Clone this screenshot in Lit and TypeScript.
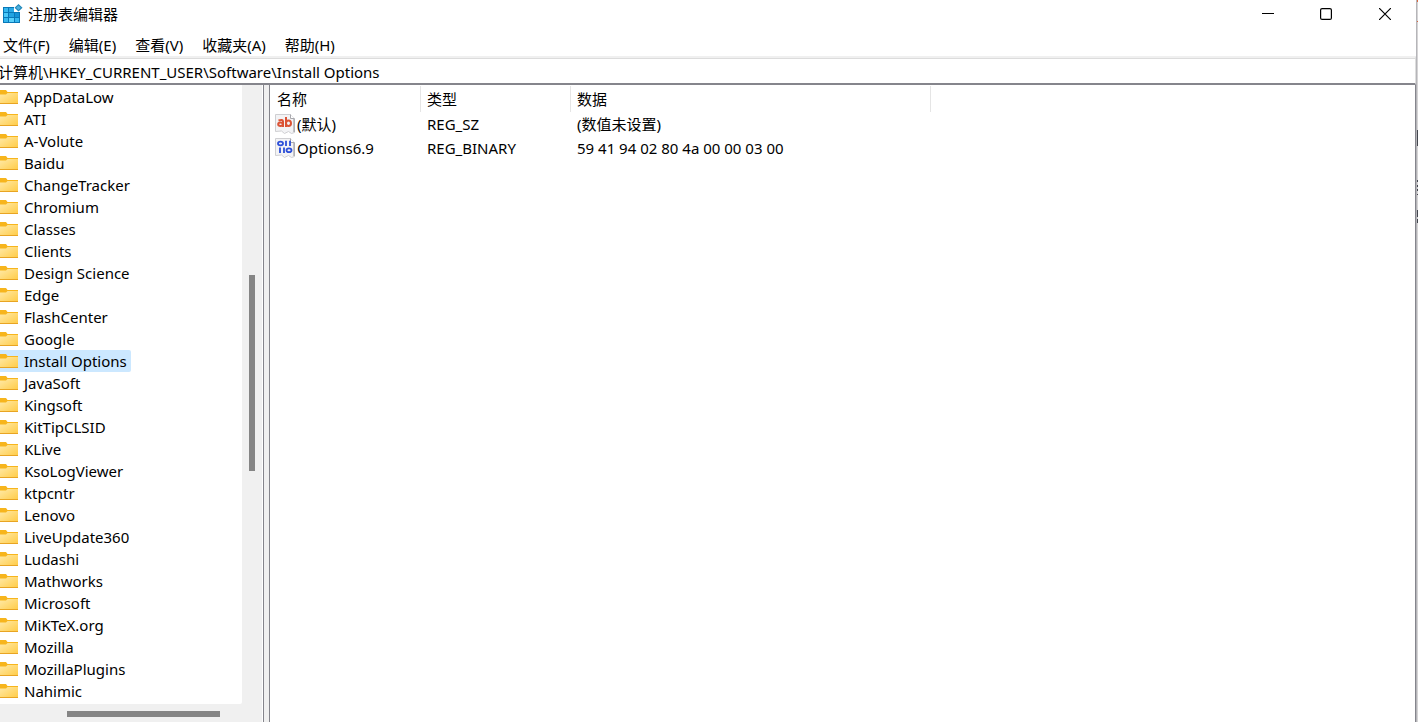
import { LitElement, html, css, svg } from "lit";
import { customElement, state } from "lit/decorators.js";
import { classMap } from "lit/directives/class-map.js";

const KEYS = [
  "AppDataLow", "ATI", "A-Volute", "Baidu", "ChangeTracker", "Chromium", "Classes",
  "Clients", "Design Science", "Edge", "FlashCenter", "Google", "Install Options",
  "JavaSoft", "Kingsoft", "KitTipCLSID", "KLive", "KsoLogViewer", "ktpcntr", "Lenovo",
  "LiveUpdate360", "Ludashi", "Mathworks", "Microsoft", "MiKTeX.org", "Mozilla",
  "MozillaPlugins", "Nahimic",
];

const VALUES = [
  { kind: "text", name: "(默认)", type: "REG_SZ", data: "(数值未设置)" },
  { kind: "binary", name: "Options6.9", type: "REG_BINARY", data: "59 41 94 02 80 4a 00 00 03 00" },
];

const MENUS = ["文件(F)", "编辑(E)", "查看(V)", "收藏夹(A)", "帮助(H)"];

const appIcon = html`<svg class="app-icon" width="20" height="20" viewBox="0 0 20 20" aria-hidden="true">
  <path d="M0 3h11v5h6v11H0z" fill="#0878b8" />
  <g fill="#35b7ee">
    <rect x="1" y="4" width="4" height="4" /><rect x="6" y="4" width="5" height="4" fill="#2aa9e6" />
    <rect x="1" y="9" width="4" height="4" fill="#4cc8f8" /><rect x="6" y="9" width="5" height="4" fill="#22a3e2" /><rect x="12" y="9" width="4" height="4" fill="#1592d6" />
    <rect x="1" y="14" width="4" height="4" /><rect x="6" y="14" width="5" height="4" fill="#5ad0fa" /><rect x="12" y="14" width="4" height="4" />
  </g>
  <path d="M15.500 0l4 3.800-4 3.800-4-3.800z" fill="#1f86b8" />
  <path d="M15.500 1.500l2.400 2.300-2.400 2.300-2.400-2.300z" fill="#4fb0de" />
</svg>`;

const folderIcon = html`<svg class="folder" width="18" height="14" viewBox="0 0 18 14" aria-hidden="true">
  <defs><linearGradient id="g" x1="0" y1="0" x2="1" y2="1">
    <stop offset="0" stop-color="#ffe9a6" /><stop offset="1" stop-color="#ffcb45" />
  </linearGradient></defs>
  <path d="M0 0h6l1.500 2h10.500v3H0z" fill="#f7b51c" />
  <path d="M0 4.500h6l1.500-1.500h10.500v11H0z" fill="url(#g)" />
  <path d="M0 13h18v1H0z" fill="#e8a423" />
</svg>`;

const page = svg`
  <path d="M.5.500h15l4 4v14l-3 1-3-2-4 2-3-2.500-6 .5z" fill="#f3f3f5" stroke="#cfcfd2" />
  <path d="M15.500 .5v4h4" fill="#fff" stroke="#a9a9ad" />
  <path d="M19 5v13" stroke="#929297" />`;

const textIcon = html`<svg width="20" height="20" viewBox="0 0 20 20" aria-hidden="true">${page}
  <g fill="none" stroke="#db5335" stroke-width="2">
    <path d="M3.500 6.500q4.500-1.500 4.500 1v5.500" /><ellipse cx="5.500" cy="10.300" rx="2.300" ry="1.700" />
    <path d="M11 3v10" /><ellipse cx="13.500" cy="9.200" rx="2.500" ry="2.800" />
  </g></svg>`;

const binaryIcon = html`<svg width="20" height="20" viewBox="0 0 20 20" aria-hidden="true">${page}
  <g fill="none" stroke="#2c4fd8" stroke-width="1.800">
    <ellipse cx="5.500" cy="5.500" rx="2.500" ry="1.800" /><path d="M11 2.800v5.200M15 2.800v5.200" />
    <path d="M5 9.500v5.500M9 9.500v5.500" /><ellipse cx="14" cy="12.200" rx="2.500" ry="1.900" />
  </g></svg>`;

@customElement("app-root")
export class AppRoot extends LitElement {
  @state() private selected = "Install Options";

  static styles = css`
    :host {
      display: flex;
      height: 100vh;
      overflow: hidden;
      background: #fff;
      color: #000;
      font: 15px/22px "Noto Sans", "Noto Sans CJK SC", sans-serif;
    }
    * { box-sizing: border-box; }
    button, input { font: inherit; color: inherit; border: 0; background: none; padding: 0; margin: 0; }
    .window { flex: 1; min-width: 0; display: flex; flex-direction: column; }
    .edge { width: 2px; background: #d5d4d5; border-left: 1px solid #b5b5b9; }
    .edge svg { display: block; }
    .title { display: flex; align-items: center; height: 28px; padding: 0 1px 0 3px; }
    .app-icon { margin-right: 5px; }
    .name { flex: 1; font: inherit; margin: 0; }
    .control { width: 58px; height: 28px; display: grid; place-items: center; }
    .control:last-child { width: 60px; }
    .menu { display: flex; gap: 19px; height: 28px; padding: 6px 3px 0; }
    .menu button { height: 22px; white-space: nowrap; }
    .address { height: 29px; border-top: 2px solid #f0f0f0; border-bottom: 2px solid #85858c; border-right: 1px solid #ddd; }
    .address input { display: block; width: 100%; height: 25px; border-top: 1px solid #dcdcdc; text-indent: -2px; outline: 0; }
    .body { flex: 1; min-height: 0; display: flex; }
    .side { width: 264px; display: grid; grid-template: 1fr 18px / 1fr 20px; background: linear-gradient(#f0f0f0, #f0f0f0) content-box #fff; border-right: 1px solid #85858c; padding-right: 1px; flex: none; }
    .tree { list-style: none; margin: 0; padding: 1px 0 0; background: #fff; overflow: hidden; border-bottom-right-radius: 2px; min-height: 0; }
    .item { display: flex; align-items: center; height: 22px; white-space: nowrap; }
    .folder { margin-right: 2px; }
    .label { padding: 0 4px; }
    .item.on { background: #cce8ff; border-radius: 0 2px 2px 0; }
    .vbar { display: flex; flex-direction: column; padding: 0 7px; }
    .hbar { display: flex; padding: 7px 0 5px; }
    .thumb { background: #858585; }
    .vbar .before { flex: 190; } .vbar .thumb { flex: 196; } .vbar .after { flex: 233; }
    .hbar .before { flex: 67; } .hbar .thumb { flex: 153; } .hbar .after { flex: 22; }
    .splitter { width: 6px; background: #f0f0f0; border-right: 1px solid #85858c; flex: none; }
    .list { flex: 1; min-width: 0; border-right: 1px solid #85858c; overflow: hidden; padding-top: 1px; }
    table { width: 100%; border-collapse: separate; border-spacing: 0; table-layout: fixed; }
    th { height: 26px; font-weight: 400; text-align: left; padding: 0 0 0 6px; border-right: 1px solid #e5e5e5; }
    th:last-child { border: 0; }
    td { height: 24px; padding: 0 0 0 6px; white-space: nowrap; }
    td:first-child { padding-left: 5px; }
    th:first-child { padding-left: 7px; }
    .c1 { width: 151px; } .c2 { width: 150px; } .c3 { width: 360px; }
    .value { display: flex; align-items: center; gap: 2px; }
  `;

  render() {
    return html`
      <main class="window">
        <header class="title">
          ${appIcon}
          <h1 class="name">注册表编辑器</h1>
          <button class="control" aria-label="最小化"><svg width="12" height="12"><path d="M0 5.500h12" stroke="#000" /></svg></button>
          <button class="control" aria-label="最大化"><svg width="12" height="12"><rect x=".6" y=".6" width="10.800" height="10.800" rx="1.500" fill="none" stroke="#000" stroke-width="1.200" /></svg></button>
          <button class="control" aria-label="关闭"><svg width="12" height="12"><path d="M0 0l12 12M12 0L0 12" stroke="#000" stroke-width="1.200" /></svg></button>
        </header>
        <nav class="menu">${MENUS.map((m) => html`<button>${m}</button>`)}</nav>
        <div class="address">
          <input aria-label="地址" .value=${`计算机\\HKEY_CURRENT_USER\\Software\\${this.selected}`} />
        </div>
        <div class="body">
          <div class="side">
            <ul class="tree">
              ${KEYS.map((k) => html`<li>
                <button class=${classMap({ item: true, on: k === this.selected })} @click=${() => (this.selected = k)}>
                  ${folderIcon}<span class="label">${k}</span>
                </button>
              </li>`)}
            </ul>
            <div class="vbar"><div class="before"></div><div class="thumb"></div><div class="after"></div></div>
            <div class="hbar"><div class="before"></div><div class="thumb"></div><div class="after"></div></div>
          </div>
          <div class="splitter"></div>
          <div class="list">
            <table>
              <colgroup><col class="c1" /><col class="c2" /><col class="c3" /><col /></colgroup>
              <thead><tr><th>名称</th><th>类型</th><th>数据</th><th></th></tr></thead>
              <tbody>
                ${VALUES.map((v) => html`<tr>
                  <td><div class="value">${v.kind === "text" ? textIcon : binaryIcon}<span>${v.name}</span></div></td>
                  <td>${v.type}</td>
                  <td>${v.data}</td>
                </tr>`)}
              </tbody>
            </table>
          </div>
        </div>
      </main>
      <div class="edge"><svg width="1" height="230" aria-hidden="true">
        <path d="M0 0h1v2H0zM0 21h1v1H0z" fill="#d9663f" />
        <path d="M0 130h1v16H0zM0 180h1v2H0zM0 185h1v2H0zM0 189h1v2H0zM0 194h1v1H0zM0 210h1v7H0zM0 219h1v4H0z" fill="#44474f" />
      </svg></div>
    `;
  }
}
